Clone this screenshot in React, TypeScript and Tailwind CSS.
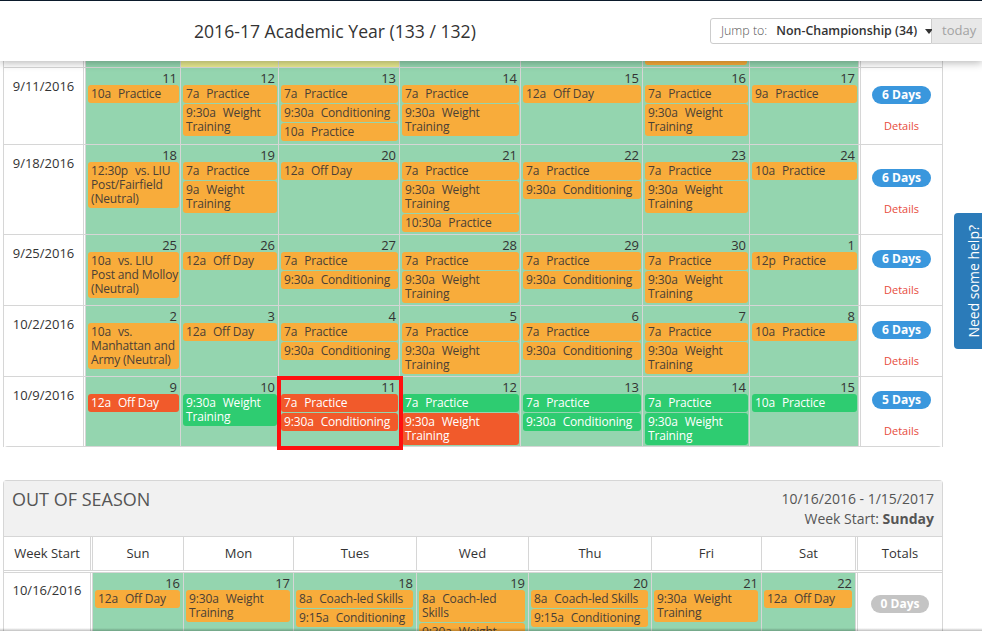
import React from 'react';

type Tone = 'o' | 'r' | 'g';
type Ev = [string, string, Tone?];
type Day = { n: number; ev: Ev[]; sel?: boolean };
type Week = { start: string; h: string; days: Day[]; total: number };

const toneCls: Record<Tone, string> = {
  o: 'bg-[#f8ac3b] text-[#4a4036]',
  r: 'bg-[#f15a2b] text-white',
  g: 'bg-[#2ecc71] text-white',
};

const weeks: Week[] = [
  {
    start: '9/11/2016',
    h: 'h-[77px]',
    total: 6,
    days: [
      { n: 11, ev: [['10a', 'Practice']] },
      { n: 12, ev: [['7a', 'Practice'], ['9:30a', 'Weight Training']] },
      { n: 13, ev: [['7a', 'Practice'], ['9:30a', 'Conditioning'], ['10a', 'Practice']] },
      { n: 14, ev: [['7a', 'Practice'], ['9:30a', 'Weight Training']] },
      { n: 15, ev: [['12a', 'Off Day']] },
      { n: 16, ev: [['7a', 'Practice'], ['9:30a', 'Weight Training']] },
      { n: 17, ev: [['9a', 'Practice']] },
    ],
  },
  {
    start: '9/18/2016',
    h: 'h-[90px]',
    total: 6,
    days: [
      { n: 18, ev: [['12:30p', 'vs. LIU Post/Fairfield (Neutral)']] },
      { n: 19, ev: [['7a', 'Practice'], ['9a', 'Weight Training']] },
      { n: 20, ev: [['12a', 'Off Day']] },
      { n: 21, ev: [['7a', 'Practice'], ['9:30a', 'Weight Training'], ['10:30a', 'Practice']] },
      { n: 22, ev: [['7a', 'Practice'], ['9:30a', 'Conditioning']] },
      { n: 23, ev: [['7a', 'Practice'], ['9:30a', 'Weight Training']] },
      { n: 24, ev: [['10a', 'Practice']] },
    ],
  },
  {
    start: '9/25/2016',
    h: 'h-[71px]',
    total: 6,
    days: [
      { n: 25, ev: [['10a', 'vs. LIU Post and Molloy (Neutral)']] },
      { n: 26, ev: [['12a', 'Off Day']] },
      { n: 27, ev: [['7a', 'Practice'], ['9:30a', 'Conditioning']] },
      { n: 28, ev: [['7a', 'Practice'], ['9:30a', 'Weight Training']] },
      { n: 29, ev: [['7a', 'Practice'], ['9:30a', 'Conditioning']] },
      { n: 30, ev: [['7a', 'Practice'], ['9:30a', 'Weight Training']] },
      { n: 1, ev: [['12p', 'Practice']] },
    ],
  },
  {
    start: '10/2/2016',
    h: 'h-[71px]',
    total: 6,
    days: [
      { n: 2, ev: [['10a', 'vs. Manhattan and Army (Neutral)']] },
      { n: 3, ev: [['12a', 'Off Day']] },
      { n: 4, ev: [['7a', 'Practice'], ['9:30a', 'Conditioning']] },
      { n: 5, ev: [['7a', 'Practice'], ['9:30a', 'Weight Training']] },
      { n: 6, ev: [['7a', 'Practice'], ['9:30a', 'Conditioning']] },
      { n: 7, ev: [['7a', 'Practice'], ['9:30a', 'Weight Training']] },
      { n: 8, ev: [['10a', 'Practice']] },
    ],
  },
  {
    start: '10/9/2016',
    h: 'h-[70px]',
    total: 5,
    days: [
      { n: 9, ev: [['12a', 'Off Day', 'r']] },
      { n: 10, ev: [['9:30a', 'Weight Training', 'g']] },
      { n: 11, sel: true, ev: [['7a', 'Practice', 'r'], ['9:30a', 'Conditioning', 'r']] },
      { n: 12, ev: [['7a', 'Practice', 'g'], ['9:30a', 'Weight Training', 'r']] },
      { n: 13, ev: [['7a', 'Practice', 'g'], ['9:30a', 'Conditioning', 'g']] },
      { n: 14, ev: [['7a', 'Practice', 'g'], ['9:30a', 'Weight Training', 'g']] },
      { n: 15, ev: [['10a', 'Practice', 'g']] },
    ],
  },
];

const offSeason: Day[] = [
  { n: 16, ev: [['12a', 'Off Day']] },
  { n: 17, ev: [['9:30a', 'Weight Training']] },
  { n: 18, ev: [['8a', 'Coach-led Skills'], ['9:15a', 'Conditioning']] },
  { n: 19, ev: [['8a', 'Coach-led Skills'], ['9:30a', 'Weight Training']] },
  { n: 20, ev: [['8a', 'Coach-led Skills'], ['9:15a', 'Conditioning']] },
  { n: 21, ev: [['9:30a', 'Weight Training']] },
  { n: 22, ev: [['12a', 'Off Day']] },
];

const Event = ({ e, roomy }: { e: Ev; roomy?: boolean }) => (
  <div
    className={`ml-[2px] mb-px rounded-[3px] py-[2px] pl-[3px] text-[12px] leading-[14px] tracking-[-0.15px] ${
      roomy ? 'mr-[3px]' : 'mr-px'
    } ${toneCls[e[2] ?? 'o']}`}
  >
    <span className="mr-[4px]">{e[0]}</span> {e[1]}
  </div>
);

const DayCell = ({ d, last, roomy }: { d: Day; last: boolean; roomy?: boolean }) => (
  <div
    className={`relative bg-[#94d5af] bg-clip-padding ${
      last ? 'border-r-[3px] border-double border-[#d6d6d6]' : 'border-r border-[#d6d6d6]'
    }`}
  >
    <div className="h-[17px] pr-[3px] pt-[2px] text-right text-[13px] leading-[16px] text-[#333]">{d.n}</div>
    {d.ev.map((e, i) => (
      <Event key={i} e={e} roomy={roomy} />
    ))}
    {d.sel && <div className="absolute -top-px -bottom-[4px] -left-[2px] -right-[4px] z-10 border-4 border-[#ff1010]" />}
  </div>
);

const Badge = ({ n, gray }: { n: number; gray?: boolean }) => (
  <span
    className={`h-[18px] rounded-full px-[10px] text-[12px] font-bold leading-[18px] text-white ${
      gray ? 'bg-[#c4c4c4]' : 'bg-[#3a97dd]'
    }`}
  >
    {n} Days
  </span>
);

const Totals = ({ n }: { n: number }) => (
  <div className="flex flex-col items-center justify-center bg-white pt-[7px]">
    <Badge n={n} />
    <span className="mt-[14px] text-[11px] leading-[16px] text-[#e74c3c]">Details</span>
  </div>
);

export default function App() {
  return (
    <div className="relative h-screen w-screen overflow-hidden bg-white font-['Open_Sans',sans-serif] text-[#333]">
      {/* top bar */}
      <header className="relative z-20 flex h-[61px] items-center border-t border-[#0b1a2b] bg-white shadow-[0_2px_8px_rgba(0,0,0,0.28)]">
        <h1 className="ml-[194px] text-[17.6px] font-normal text-[#333]">2016-17 Academic Year (133 / 132)</h1>
        <div className="ml-auto flex h-[26px] whitespace-nowrap text-[12.4px]">
          <button className="flex w-[222px] items-center rounded-l-[3px] border border-[#ccc] bg-white pl-[10px]">
            <span className="font-light text-[#555]">Jump to:</span>
            <span className="ml-[9px] font-semibold text-[#333]">Non-Championship (34)</span>
            <span className="ml-[8px] h-0 w-0 border-l-4 border-r-4 border-t-[5px] border-l-transparent border-r-transparent border-t-[#333]" />
          </button>
          <button className="w-[50px] border-y border-[#d4d4d4] bg-[#e8e8e8] pl-[10px] text-left text-[13px] text-[#a3a3a3]">today</button>
        </div>
      </header>

      {/* weeks calendar */}
      <div className="ml-[3px] w-[940px] border-x border-[#d6d6d6]">
        {/* tail of the previous week, under the bar */}
        <div className="grid h-[7px] grid-cols-[82px_95px_98px_121px_121px_122px_107px_111px_81px] border-b border-[#d6d6d6]">
          <div className="border-r-[3px] border-double border-[#d6d6d6] bg-white" />
          <div className="border-r border-[#d6d6d6] bg-[#94d5af]" />
          <div className="border-r border-[#d6d6d6] bg-[#e6e88e]" />
          <div className="border-r border-[#d6d6d6] bg-[#e6e88e]" />
          <div className="border-r border-[#d6d6d6] bg-[#94d5af]" />
          <div className="border-r border-[#d6d6d6] bg-[#94d5af]" />
          <div className="border-r border-[#d6d6d6] bg-[#94d5af]">
            <div className="mx-[2px] h-[4px] rounded-b-[3px] bg-[#f8ac3b]" />
          </div>
          <div className="border-r-[3px] border-double border-[#d6d6d6] bg-[#94d5af] bg-clip-padding" />
          <div className="bg-white" />
        </div>

        {weeks.map((w, wi) => (
          <div
            key={w.start}
            className={`grid grid-cols-[82px_95px_98px_121px_121px_122px_107px_111px_81px] border-b border-[#d6d6d6] ${w.h} ${
              wi === weeks.length - 1 ? 'rounded-b-[4px]' : ''
            }`}
          >
            <div className="border-r-[3px] border-double border-[#d6d6d6] bg-white pt-[9px] text-center text-[13px] leading-[18px] text-[#333]">
              {w.start}
            </div>
            {w.days.map((d, i) => (
              <DayCell key={i} d={d} last={i === 6} />
            ))}
            <Totals n={w.total} />
          </div>
        ))}
      </div>

      {/* out of season */}
      <section className="ml-[3px] mt-[33px] w-[940px] rounded-t-[4px] border-x border-t border-[#d6d6d6]">
        <div className="flex h-[56px] justify-between border-b border-[#d6d6d6] bg-[#f1f1f1] px-[8px]">
          <h2 className="pt-[6px] text-[18px] font-normal leading-[24px] text-[#555]">OUT OF SEASON</h2>
          <div className="pt-[8px] text-right text-[14px] leading-[20px] text-[#555]">
            <div>10/16/2016 - 1/15/2017</div>
            <div>
              Week Start: <b className="font-bold">Sunday</b>
            </div>
          </div>
        </div>
        <div className="grid h-[36px] grid-cols-[89px_91px_110px_123px_112px_123px_110px_96px_84px] border-b-[3px] border-double border-[#d6d6d6] text-center text-[13px] leading-[32px] text-[#333]">
          <div className="border-r-[3px] border-double border-[#d6d6d6]">Week Start</div>
          {['Sun', 'Mon', 'Tues', 'Wed', 'Thu', 'Fri'].map((d) => (
            <div key={d} className="border-r border-[#d6d6d6]">
              {d}
            </div>
          ))}
          <div className="border-r-[3px] border-double border-[#d6d6d6]">Sat</div>
          <div>Totals</div>
        </div>
        <div className="grid h-[80px] grid-cols-[89px_91px_110px_123px_112px_123px_110px_96px_84px]">
          <div className="border-r-[3px] border-double border-[#d6d6d6] bg-white pt-[8px] text-center text-[13px] leading-[18px] text-[#333]">
            10/16/2016
          </div>
          {offSeason.map((d, i) => (
            <DayCell key={i} d={d} last={i === 6} roomy />
          ))}
          <div className="flex items-start justify-center bg-white pt-[22px]">
            <Badge n={0} gray />
          </div>
        </div>
      </section>

      {/* help tab */}
      <button className="absolute left-[954px] top-[213px] z-30 flex h-[136px] w-[38px] items-center justify-center rounded-l-[4px] bg-[#2b7bb9] text-[14px] text-white">
        <span className="rotate-180 [writing-mode:vertical-rl]">Need some help?</span>
      </button>

      <div className="absolute inset-x-0 bottom-0 z-30 h-[3px] bg-gradient-to-b from-transparent to-black/25" />
    </div>
  );
}
